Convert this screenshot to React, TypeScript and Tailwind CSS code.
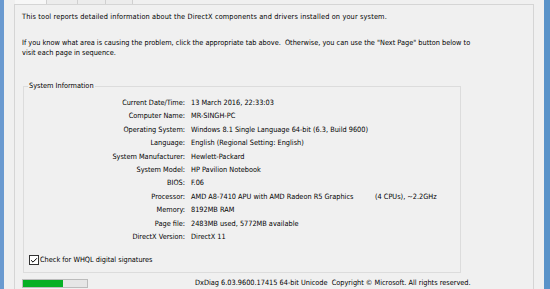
import { Check } from "lucide-react";

const ROWS: [string, string][] = [
  ["Current Date/Time:", "13 March 2016, 22:33:03"],
  ["Computer Name:", "MR-SINGH-PC"],
  ["Operating System:", "Windows 8.1 Single Language 64-bit (6.3, Build 9600)"],
  ["Language:", "English (Regional Setting: English)"],
  ["System Manufacturer:", "Hewlett-Packard"],
  ["System Model:", "HP Pavilion Notebook"],
  ["BIOS:", "F.06"],
  ["Processor:", "AMD A8-7410 APU with AMD Radeon R5 Graphics"],
  ["Memory:", "8192MB RAM"],
  ["Page file:", "2483MB used, 5772MB available"],
  ["DirectX Version:", "DirectX 11"],
];

const TABS = ["System", "Display", "Sound", "Input"];

export default function App() {
  return (
    <div className="w-[550px] h-[289px] overflow-hidden flex bg-[#f0f0f0] text-black font-['DejaVu_Sans_Condensed','Liberation_Sans',sans-serif] text-[7.3px]">
      {/* window frame, left */}
      <div className="w-[4px] shrink-0 bg-[#6a9ad0]" />

      <div className="flex-1 flex flex-col pl-[10px] pr-[10px]">
        <div className="flex h-[4px] items-end overflow-visible">
          <div className="flex -mt-[14px] pl-[1px]">
            {TABS.map((t, i) => (
              <div
                key={t}
                className={`h-[18px] flex items-end justify-center pb-[1px] border-r border-[#d0d0d0] text-[8px] leading-[10px] ${i === 0 ? "w-[32px] bg-[#f7f7f7]" : i === 1 ? "w-[31px] bg-[#ececec]" : i === 2 ? "w-[28px] bg-[#ececec]" : "w-[27px] bg-[#ececec]"}`}
              >
                <span className="translate-y-[-4px]">{t}</span>
              </div>
            ))}
          </div>
        </div>

        {/* Tab page */}
        <div className="flex-1 border-l border-t border-r border-[#d5d5d5] pl-[7px] pt-[7px]">
          <p className="leading-[10px] tracking-[0.15px]">
            This tool reports detailed information about the DirectX components and drivers installed on your system.
          </p>
          <p className="mt-[16px] leading-[10px]">
            If you know what area is causing the problem, click the appropriate tab above.&nbsp; Otherwise, you can use the "Next Page" button below to
            <br />
            visit each page in sequence.
          </p>

          <fieldset className="mt-[23px] ml-[1px] w-[438px] border border-[#dcdcdc] px-0 pb-[6px]">
            <legend className="ml-[4px] px-[1px] leading-[10px]">System Information</legend>

            <div className="mt-[5px] grid grid-cols-[161px_1fr] gap-x-[6px] leading-[13.4px]">
              {ROWS.map(([k, v]) => (
                <div key={k} className="contents">
                  <span className="text-right">{k}</span>
                  <span className="whitespace-nowrap">
                    {k === "Processor:" ? (
                      <>
                        <span className="inline-block w-[184px]">{v}</span>
                        <span>(4 CPUs), ~2.2GHz</span>
                      </>
                    ) : (
                      v
                    )}
                  </span>
                </div>
              ))}
            </div>

            <div className="mt-[11px] ml-[5px] flex items-center gap-[1px] leading-[12px]">
              <div className="w-[10px] h-[10px] border border-[#333] bg-white flex items-center justify-center">
                <Check size={9} strokeWidth={3} className="text-black" />
              </div>
              <span>Check for WHQL digital signatures</span>
            </div>
          </fieldset>

          <div className="mt-[5px] flex items-center">
            <div className="w-[66px] h-[9px] border border-[#bcbcbc] bg-[#e6e6e6] flex">
              <div className="w-[40px] h-full bg-[#06b025]" />
            </div>
            <span className="ml-[107px] leading-[10px] whitespace-nowrap">
              DxDiag 6.03.9600.17415 64-bit Unicode&nbsp; Copyright © Microsoft. All rights reserved.
            </span>
          </div>
        </div>
      </div>

      {/* window frame, right */}
      <div className="w-[6px] shrink-0 bg-[#5a93c9]" />
    </div>
  );
}
